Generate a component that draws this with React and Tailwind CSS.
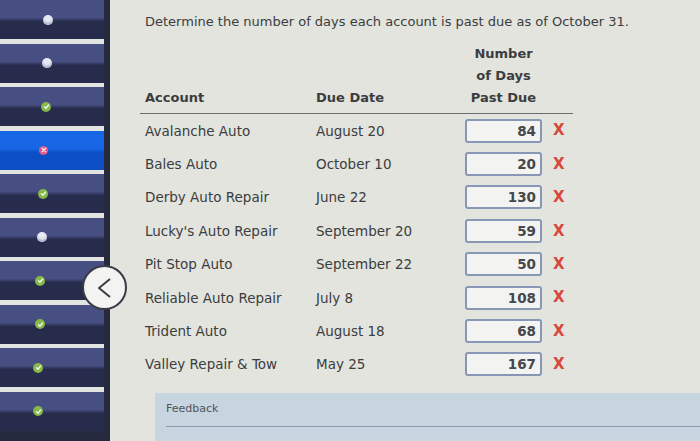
import React from "react";

const navItems = [
  { kind: "dot", pos: "ml-[43px]" },
  { kind: "dot", pos: "ml-[42px]" },
  { kind: "check", pos: "ml-[41px]" },
  { kind: "wrong", pos: "ml-[39px]" },
  { kind: "check", pos: "ml-[38px]" },
  { kind: "dot", pos: "ml-[37px]" },
  { kind: "check", pos: "ml-[35px]" },
  { kind: "check", pos: "ml-[35px]" },
  { kind: "check", pos: "ml-[33px]" },
  { kind: "check", pos: "ml-[33px]" },
];

const rows = [
  { account: "Avalanche Auto", due: "August 20", days: "84" },
  { account: "Bales Auto", due: "October 10", days: "20" },
  { account: "Derby Auto Repair", due: "June 22", days: "130" },
  { account: "Lucky's Auto Repair", due: "September 20", days: "59" },
  { account: "Pit Stop Auto", due: "September 22", days: "50" },
  { account: "Reliable Auto Repair", due: "July 8", days: "108" },
  { account: "Trident Auto", due: "August 18", days: "68" },
  { account: "Valley Repair & Tow", due: "May 25", days: "167" },
];

const StatusDot = ({ kind }) => {
  if (kind === "check") {
    return (
      <div className="w-[10px] h-[10px] rounded-full bg-[#86b84a] flex items-center justify-center">
        <svg width="7" height="7" viewBox="0 0 10 10">
          <path d="M2 5.5 L4.2 7.5 L8 2.8" stroke="#f2f7e8" strokeWidth="2" fill="none" strokeLinecap="round" />
        </svg>
      </div>
    );
  }
  if (kind === "wrong") {
    return (
      <div className="w-[9px] h-[9px] rounded-full bg-[#e0588a] flex items-center justify-center">
        <svg width="6" height="6" viewBox="0 0 10 10">
          <path d="M2 2 L8 8 M8 2 L2 8" stroke="#fbe6ee" strokeWidth="2.2" strokeLinecap="round" />
        </svg>
      </div>
    );
  }
  return <div className="w-[10px] h-[10px] rounded-full bg-[#e6e9f2] shadow-[inset_0_-2px_2px_#aab2c8]" />;
};

const Sidebar = () => {
  return (
    <div className="w-[110px] shrink-0 h-[441px] overflow-hidden bg-[#262a3e] flex flex-col">
      {navItems.map((item, i) => (
        <div key={i} className="w-[104px] flex flex-col shrink-0">
          {i > 0 && <div className="h-[4.5px] bg-[#e2e4e2]" />}
          <div
            className={
              item.kind === "wrong"
                ? "relative h-[39px] bg-[linear-gradient(#1766e6_0%,#1766e6_45%,#0c4fc4_55%,#0c4fc4_100%)] flex items-center"
                : "relative h-[39px] bg-[linear-gradient(#464e82_0%,#464e82_45%,#272c4c_55%,#272c4c_100%)] flex items-center"
            }
          >
            <div className={item.pos}>
              <StatusDot kind={item.kind} />
            </div>
          </div>
        </div>
      ))}
    </div>
  );
};

const App = () => {
  return (
    <div
      className="relative w-[700px] h-[441px] overflow-hidden flex bg-[#e2e4dd] text-[#3b3d40]"
      style={{ fontFamily: '"DejaVu Sans", Verdana, sans-serif' }}
    >
      <Sidebar />

      {/* back button */}
      <div className="absolute left-[82px] top-[265px] w-[45px] h-[45px] rounded-full border-2 border-[#3a3b45] bg-[#f3f3f1] flex items-center justify-center">
        <svg width="20" height="24" viewBox="0 0 20 24">
          <path d="M15 3 L4 12 L15 21" stroke="#3a3b45" strokeWidth="2" fill="none" strokeLinejoin="round" />
        </svg>
      </div>

      <div className="flex-1 flex flex-col pt-[12px]">
        <p className="pl-[35px] text-[13px] leading-[20px]">
          Determine the number of days each account is past due as of October 31.
        </p>

        <div className="ml-[30px] w-[433px] mt-[11px]">
          {/* header */}
          <div className="flex items-end border-b border-[#6b6d70] pb-[4px] font-bold text-[13px] leading-[22px]">
            <div className="w-[176px] pl-[5px]">Account</div>
            <div className="w-[149px]">Due Date</div>
            <div className="w-[77px] text-center">
              <div>Number</div>
              <div>of Days</div>
              <div>Past Due</div>
            </div>
          </div>

          {/* rows */}
          {rows.map((row) => (
            <div key={row.account} className="flex items-center h-[33.4px] text-[13.5px]">
              <div className="w-[176px] pl-[5px]">{row.account}</div>
              <div className="w-[149px]">{row.due}</div>
              <div className="w-[77px] h-[24px] rounded-[3px] border-2 border-[#8897b6] bg-[#f3f4f1] flex items-center justify-end pr-[4px] font-bold text-[13.5px] text-[#45474c]">
                {row.days}
              </div>
              <div className="ml-[11px] text-[#d9473b] font-bold text-[15px]">X</div>
            </div>
          ))}
        </div>

        {/* feedback */}
        <div className="mt-[12px] ml-[45px] flex-1 bg-[#c6d5df] pl-[11px] pt-[9px]">
          <div className="border-b border-[#8a9aa8] pb-[10px] text-[11px] leading-[14px] text-[#4f5458]">
            Feedback
          </div>
        </div>
      </div>
    </div>
  );
};

export default App;
